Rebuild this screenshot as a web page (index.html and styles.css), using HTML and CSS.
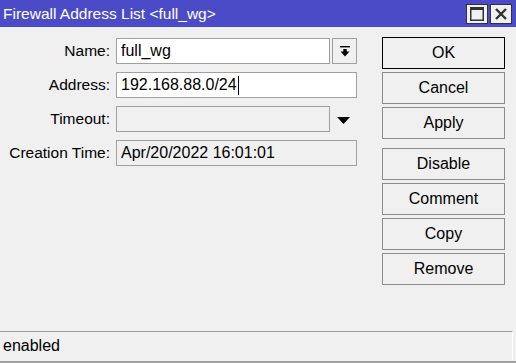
FILE: index.html
```html
<!DOCTYPE html>
<html>
<head>
<meta charset="utf-8">
<link rel="stylesheet" href="styles.css">
</head>
<body>
<div class="window">
  <div class="titlebar">
    <span class="title">Firewall Address List &lt;full_wg&gt;</span>
    <div class="tb-buttons">
      <span class="tb-btn">
        <svg width="14" height="14" viewBox="0 0 14 14"><rect x="0.75" y="0.75" width="12.5" height="12.5" fill="none" stroke="#333" stroke-width="1.5"/><rect x="0" y="0" width="14" height="3" fill="#333"/></svg>
      </span>
      <span class="tb-btn">
        <svg width="14" height="14" viewBox="0 0 14 14"><path d="M2 2 L12 12 M12 2 L2 12" stroke="#333" stroke-width="2.4"/></svg>
      </span>
    </div>
  </div>
  <div class="main">
    <div class="form">
      <div class="row">
        <label class="lbl">Name:</label>
        <div class="field short white">full_wg</div>
        <span class="dd-btn">
          <svg width="10" height="11" viewBox="0 0 10 11"><rect x="0" y="0" width="10" height="1.4" fill="#000"/><rect x="3.3" y="3" width="3.4" height="3" fill="#000"/><path d="M0.5 5.5 L9.5 5.5 L5 10.5 Z" fill="#000"/></svg>
        </span>
      </div>
      <div class="row">
        <label class="lbl">Address:</label>
        <div class="field long white">192.168.88.0/24<span class="caret"></span></div>
      </div>
      <div class="row">
        <label class="lbl">Timeout:</label>
        <div class="field short"></div>
        <span class="dd-tri">
          <svg width="13" height="7" viewBox="0 0 13 7"><path d="M0 0 L13 0 L6.5 7 Z" fill="#000"/></svg>
        </span>
      </div>
      <div class="row">
        <label class="lbl">Creation Time:</label>
        <div class="field long">Apr/20/2022 16:01:01</div>
      </div>
    </div>
    <div class="buttons">
      <div class="btn default">OK</div>
      <div class="btn">Cancel</div>
      <div class="btn">Apply</div>
      <div class="btn sep">Disable</div>
      <div class="btn">Comment</div>
      <div class="btn">Copy</div>
      <div class="btn">Remove</div>
    </div>
  </div>
  <div class="status">enabled</div>
  <div class="bottomline"></div>
</div>
</body>
</html>
```
FILE: styles.css
```css
html, body {
  margin: 0;
  padding: 0;
}
body {
  width: 516px;
  height: 363px;
  overflow: hidden;
  background: #f0f0f0;
  font-family: "Liberation Sans", Arial, sans-serif;
  font-size: 15.5px;
  color: #000;
}
.window {
  display: flex;
  flex-direction: column;
  height: 363px;
}
.titlebar {
  height: 27px;
  background: #4b4bc8;
  display: flex;
  align-items: center;
  justify-content: space-between;
  padding-left: 3px;
  padding-right: 4px;
  flex: none;
}
.title {
  color: #fff;
  font-size: 15.5px;
  line-height: 1;
  margin-top: 1px;
}
.tb-buttons {
  display: flex;
  gap: 2px;
  align-items: center;
}
.tb-btn {
  width: 20px;
  height: 18px;
  border: 1px solid #333;
  background: #f0f0f0;
  display: flex;
  align-items: center;
  justify-content: center;
}
.main {
  flex: 1;
  display: flex;
  padding-top: 10px;
}
.form {
  width: 357px;
  display: flex;
  flex-direction: column;
  gap: 8px;
  padding-top: 1px;
}
.row {
  display: flex;
  align-items: center;
  height: 26px;
}
.lbl {
  width: 110px;
  text-align: right;
  margin-right: 6px;
  flex: none;
}
.field {
  height: 24px;
  border: 1px solid #a0a0a0;
  display: flex;
  align-items: center;
  padding-left: 4px;
  box-sizing: content-box;
  background: #f0f0f0;
  white-space: nowrap;
  font-size: 16px;
}
.field.white {
  background: #fff;
}
.field.short {
  width: 208px;
}
.field.long {
  width: 235px;
}
.caret {
  display: inline-block;
  width: 1px;
  height: 19px;
  background: #000;
  margin-left: 1px;
}
.dd-btn {
  width: 23px;
  height: 24px;
  margin-left: 2px;
  border: 1px solid #a0a0a0;
  background: #f0f0f0;
  display: flex;
  align-items: center;
  justify-content: center;
}
.dd-tri {
  width: 27px;
  display: flex;
  justify-content: center;
  align-items: center;
  margin-left: 0;
  padding-top: 2px;
}
.buttons {
  margin-left: 25px;
  width: 123px;
  display: flex;
  flex-direction: column;
  gap: 3px;
}
.btn {
  height: 30px;
  border: 1px solid #8c8c8c;
  background: #f0f0f0;
  display: flex;
  align-items: center;
  justify-content: center;
  box-sizing: content-box;
  width: 121px;
  font-size: 16px;
}
.btn.default {
  border-color: #000;
}
.btn.sep {
  margin-top: 6px;
}
.status {
  height: 28px;
  border-top: 1px solid #a0a0a0;
  border-right: 1px solid #fff;
  margin-right: 3px;
  padding-left: 3px;
  display: flex;
  align-items: center;
  flex: none;
  font-size: 16px;
}
.bottomline {
  height: 2px;
  background: #a0a0a0;
  flex: none;
  margin-top: 1px;
}
```
